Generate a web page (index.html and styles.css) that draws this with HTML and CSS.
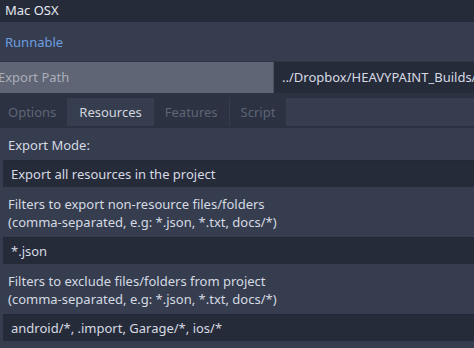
FILE: index.html
```html
<!DOCTYPE html>
<html lang="en">
<head>
    <meta charset="UTF-8">
    <title>Export</title>
    <link rel="stylesheet" href="styles.css">
</head>
<body>

    <!-- Preset name -->
    <div class="preset">Mac OSX</div>

    <div class="runnable">Runnable</div>

    <!-- Export path -->
    <div class="path-row">
        <div class="path-label">Export Path</div>
        <div class="path-value">../Dropbox/HEAVYPAINT_Builds/Desktop/HEAVYPAINT.dmg</div>
    </div>

    <!-- Tabs -->
    <div class="tabs">
        <div class="tab">Options</div>
        <div class="tab active">Resources</div>
        <div class="tab">Features</div>
        <div class="tab">Script</div>
    </div>

    <div class="panel">
        <div class="label">Export Mode:</div>
        <div class="field">Export all resources in the project</div>

        <div class="label">Filters to export non-resource files/folders<br>(comma-separated, e.g: *.json, *.txt, docs/*)</div>
        <div class="field">*.json</div>

        <div class="label">Filters to exclude files/folders from project<br>(comma-separated, e.g: *.json, *.txt, docs/*)</div>
        <div class="field">android/*, .import, Garage/*, ios/*</div>
    </div>

</body>
</html>
```

FILE: styles.css
```css
/* General */
body {
    margin: 0;
    padding: 0;
    background-color: #353d4f;
    font-family: "Noto Sans", "Open Sans", sans-serif;
    font-size: 13px;
    color: #d6dae2;
    overflow: hidden;
}

.preset {
    height: 22px;
    line-height: 20px;
    padding-left: 5px;
    background-color: #262b3a;
    color: #e4e7ee;
}

.runnable {
    height: 39px;
    line-height: 40px;
    padding-left: 5px;
    color: #6f9ee0;
    border-bottom: 1px solid #2f3646;
}

/* Export path */
.path-row {
    display: flex;
    height: 31px;
}

.path-label {
    width: 273px;
    background-color: #5f6574;
    color: #a9aeb9;
    line-height: 31px;
    text-indent: -2px;
    border-right: 1px solid #4c5262;
}

.path-value {
    flex: 1;
    background-color: #262b3a;
    line-height: 31px;
    padding-left: 8px;
    white-space: nowrap;
    overflow: hidden;
}

/* Tabs */
.tabs {
    display: flex;
    gap: 1px;
    margin-top: 5px;
    height: 28px;
    border-bottom: 2px solid #2b3141;
    box-shadow: 0 -5px 0 #2c3242;
}

.tab {
    padding: 0 11px;
    line-height: 28px;
    background-color: #2c3242;
    color: #5d6576;
}

.tab:first-child {
    padding-left: 8px;
}

.tab.active {
    background-color: #353d4f;
    color: #d2d6de;
}

/* Panel */
.panel {
    padding: 0 0 0 3px;
}

.label {
    padding: 8px 5px 6px;
    line-height: 18px;
}

.field {
    height: 26px;
    line-height: 26px;
    padding-left: 8px;
    background-color: #262b3a;
    border-top: 1px solid #22283a;
}
```
